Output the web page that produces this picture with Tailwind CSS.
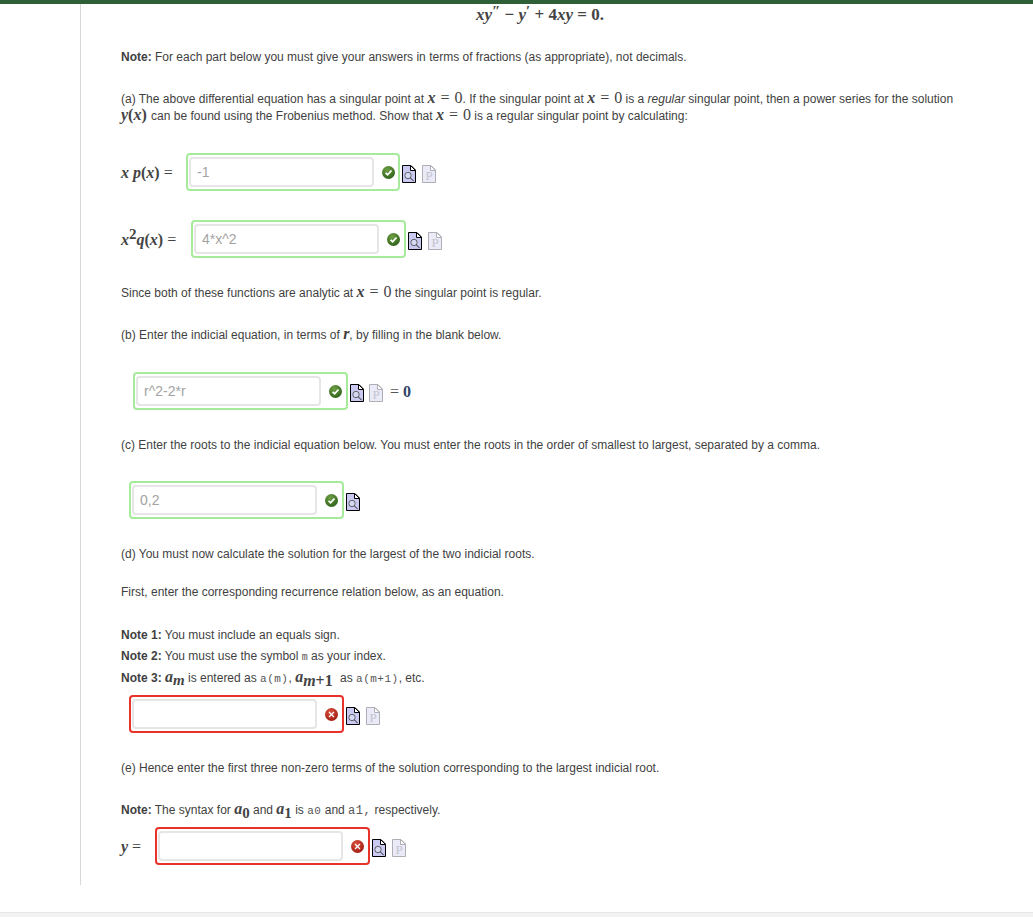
<!DOCTYPE html>
<html lang="en">
<head>
  <meta charset="UTF-8" />
  <meta name="viewport" content="width=device-width, initial-scale=1.0" />
  <title>Frobenius method question</title>
  <script src="https://cdn.jsdelivr.net/npm/@tailwindcss/browser@4"></script>
</head>
<body class="bg-white min-h-screen overflow-hidden font-['Liberation_Sans',Arial,sans-serif] text-[12px] leading-[17px] text-[#3f3f3f]">

  <!-- shared icons -->
  <svg class="absolute w-0 h-0" aria-hidden="true">
    <defs>
      <radialGradient id="okFill" cx="40%" cy="30%" r="75%"><stop offset="0" stop-color="#6f9f45"/><stop offset="1" stop-color="#2c5f17"/></radialGradient>
      <radialGradient id="badFill" cx="40%" cy="30%" r="75%"><stop offset="0" stop-color="#d9503c"/><stop offset="1" stop-color="#a01c12"/></radialGradient>
    </defs>
    <symbol id="ok" viewBox="0 0 13 13">
      <circle cx="6.5" cy="6.5" r="6.5" fill="url(#okFill)"/>
      <path d="M3.6 6.8l2 2 3.900-4.300" fill="none" stroke="#fff" stroke-width="1.8"/>
    </symbol>
    <symbol id="bad" viewBox="0 0 13 13">
      <circle cx="6.5" cy="6.5" r="6.5" fill="url(#badFill)"/>
      <path d="M4 4l5 5M9 4l-5 5" fill="none" stroke="#fff" stroke-width="1.3"/>
    </symbol>
    <symbol id="preview" viewBox="0 0 14 18">
      <path d="M.5.5h8.500l4.500 4.500v12.500h-13z" fill="#c9c9f2" stroke="#000"/>
      <path d="M8.500.5v5h5z" fill="#fff" stroke="#000"/>
      <circle cx="6" cy="10.500" r="3.200" fill="#d5d9f4" stroke="#555" stroke-width=".9"/>
      <path d="M8.300 12.800l3.400 3.400" stroke="#222" stroke-width="1"/>
    </symbol>
    <symbol id="pdoc" viewBox="0 0 14 18">
      <path d="M.5.5h8.500l4.500 4.500v12.500h-13z" fill="#eaeaf9" stroke="#aeaeb4"/>
      <path d="M8.500.5v5h5z" fill="#fff" stroke="#aeaeb4"/>
    </symbol>
  </svg>

  <div class="h-[4px] bg-[#2f5f37]"></div>

  <main class="ml-[80px] h-[881px] border-l border-[#d8d8d8] pl-[40px]">
    <div class="h-[22px] pl-[355px] font-['Liberation_Serif',serif] text-[17px] leading-[22px] font-semibold text-[#444]"><i>xy</i><span class="text-[15px] leading-none align-[4px]">″</span> − <i>y</i><span class="text-[15px] leading-none align-[4px]">′</span> + 4<i>xy</i> = 0.</div>

    <p class="mt-[23px]"><b>Note:</b> For each part below you must give your answers in terms of fractions (as appropriate), not decimals.</p>

    <p class="mt-[25px]">(a) The above differential equation has a singular point at <span class="font-['Liberation_Serif',serif] text-[16px] leading-[12px] text-[#444]"><i class="font-semibold">x</i><span class="mx-[1px]"> = </span>0</span>. If the singular point at <span class="font-['Liberation_Serif',serif] text-[16px] leading-[12px] text-[#444]"><i class="font-semibold">x</i><span class="mx-[1px]"> = </span>0</span> is a <i>regular</i> singular point, then a power series for the solution<br>
      <span class="font-['Liberation_Serif',serif] text-[16px] leading-[12px] font-semibold text-[#444] mr-[1px]"><i>y</i>(<i>x</i>)</span> can be found using the Frobenius method. Show that <span class="font-['Liberation_Serif',serif] text-[16px] leading-[12px] text-[#444]"><i class="font-semibold">x</i><span class="mx-[1px]"> = </span>0</span> is a regular singular point by calculating:</p>

    <div class="mt-[28px] flex items-center h-[38px]">
      <span class="w-[65px] font-['Liberation_Serif',serif] text-[16px] font-semibold text-[#444]"><i>x p</i>(<i>x</i>) <span class="font-normal">=</span></span>
      <div class="w-[214px] h-[38px] flex items-center border-2 border-[#a7ea9c] rounded-[4px] pl-[1px]">
        <input value="-1" class="w-[185px] h-[30px] px-[6px] border-2 border-[#e6e6e6] rounded-[4px] text-[14px] text-[#a3a3a3] outline-none">
        <svg class="ml-[8px] w-[13px] h-[13px]"><use href="#ok"/></svg>
      </div>
      <svg class="ml-[2px] mt-[4px] w-[14px] h-[18px]"><use href="#preview"/></svg>
      <svg class="ml-[6px] mt-[4px] w-[14px] h-[18px]" viewBox="0 0 14 18"><use href="#pdoc"/><text x="3.500" y="15" font-family="Liberation Serif, serif" font-size="13" fill="#c4c4cc">P</text></svg>
    </div>

    <div class="mt-[29px] flex items-center h-[38px]">
      <span class="w-[70px] font-['Liberation_Serif',serif] text-[16px] font-semibold text-[#444]"><i>x</i><span class="text-[15px] leading-[6px] align-[6px]">2</span><i>q</i>(<i>x</i>) <span class="font-normal">=</span></span>
      <div class="w-[215px] h-[38px] flex items-center border-2 border-[#a7ea9c] rounded-[4px] pl-[1px]">
        <input value="4*x^2" class="w-[185px] h-[30px] px-[6px] border-2 border-[#e6e6e6] rounded-[4px] text-[14px] text-[#a3a3a3] outline-none">
        <svg class="ml-[8px] w-[13px] h-[13px]"><use href="#ok"/></svg>
      </div>
      <svg class="ml-[2px] mt-[4px] w-[14px] h-[18px]"><use href="#preview"/></svg>
      <svg class="ml-[6px] mt-[4px] w-[14px] h-[18px]" viewBox="0 0 14 18"><use href="#pdoc"/><text x="3.500" y="15" font-family="Liberation Serif, serif" font-size="13" fill="#c4c4cc">P</text></svg>
    </div>

    <p class="mt-[27px]">Since both of these functions are analytic at <span class="font-['Liberation_Serif',serif] text-[16px] leading-[12px] text-[#444]"><i class="font-semibold">x</i><span class="mx-[1px]"> = </span>0</span> the singular point is regular.</p>

    <p class="mt-[25px]">(b) Enter the indicial equation, in terms of <i class="font-['Liberation_Serif',serif] text-[16px] leading-[12px] font-semibold">r</i>, by filling in the blank below.</p>

    <div class="mt-[28px] ml-[12px] flex items-center h-[38px]">
      <div class="w-[215px] h-[38px] flex items-center border-2 border-[#a7ea9c] rounded-[4px] pl-[1px]">
        <input value="r^2-2*r" class="w-[185px] h-[30px] px-[6px] border-2 border-[#e6e6e6] rounded-[4px] text-[14px] text-[#a3a3a3] outline-none">
        <svg class="ml-[8px] w-[13px] h-[13px]"><use href="#ok"/></svg>
      </div>
      <svg class="ml-[2px] mt-[4px] w-[14px] h-[18px]"><use href="#preview"/></svg>
      <svg class="ml-[5px] mt-[4px] w-[14px] h-[18px]" viewBox="0 0 14 18"><use href="#pdoc"/><text x="3.500" y="15" font-family="Liberation Serif, serif" font-size="13" fill="#c4c4cc">P</text></svg>
      <span class="ml-[7px] font-['Liberation_Serif',serif] text-[16px] text-[#555]">= <b class="text-[#2f4468]">0</b></span>
    </div>

    <p class="mt-[27px]">(c) Enter the roots to the indicial equation below. You must enter the roots in the order of smallest to largest, separated by a comma.</p>

    <div class="mt-[27px] ml-[8px] flex items-center h-[38px]">
      <div class="w-[215px] h-[38px] flex items-center border-2 border-[#a7ea9c] rounded-[4px] pl-[1px]">
        <input value="0,2" class="w-[185px] h-[30px] px-[6px] border-2 border-[#e6e6e6] rounded-[4px] text-[14px] text-[#a3a3a3] outline-none">
        <svg class="ml-[8px] w-[13px] h-[13px]"><use href="#ok"/></svg>
      </div>
      <svg class="ml-[2px] mt-[4px] w-[14px] h-[18px]"><use href="#preview"/></svg>
    </div>

    <p class="mt-[27px]">(d) You must now calculate the solution for the largest of the two indicial roots.</p>

    <p class="mt-[21px]">First, enter the corresponding recurrence relation below, as an equation.</p>

    <p class="mt-[26px]"><b>Note 1:</b> You must include an equals sign.</p>
    <p class="mt-[4px]"><b>Note 2:</b> You must use the symbol <span class="font-['Liberation_Mono',monospace] text-[10px] leading-none text-[#555]">m</span> as your index.</p>
    <p class="mt-[5px] whitespace-nowrap"><b>Note 3:</b> <span class="font-['Liberation_Serif',serif] text-[16px] leading-[12px] font-semibold text-[#444]"><i>a<span class="text-[15px] leading-[6px] align-[-3px]">m</span></i></span> is entered as <span class="font-['Liberation_Mono',monospace] text-[11px] leading-none tracking-[0.5px] text-[#555]">a(m)</span>, <span class="font-['Liberation_Serif',serif] text-[16px] leading-[12px] font-semibold text-[#444] mr-[4px]"><i>a</i><span class="text-[16px] leading-[6px] align-[-4px]"><i>m</i>+1</span></span> as <span class="font-['Liberation_Mono',monospace] text-[11px] leading-none tracking-[0.5px] text-[#555]">a(m+1)</span>, etc.</p>

    <div class="mt-[8px] ml-[8px] flex items-center h-[38px]">
      <div class="w-[215px] h-[38px] flex items-center border-2 border-[#e8332a] rounded-[4px] pl-[1px]">
        <input class="w-[185px] h-[30px] px-[6px] border-2 border-[#e6e6e6] rounded-[4px] text-[14px] outline-none">
        <svg class="ml-[8px] w-[13px] h-[13px]"><use href="#bad"/></svg>
      </div>
      <svg class="ml-[2px] mt-[4px] w-[14px] h-[18px]"><use href="#preview"/></svg>
      <svg class="ml-[6px] mt-[4px] w-[14px] h-[18px]" viewBox="0 0 14 18"><use href="#pdoc"/><text x="3.500" y="15" font-family="Liberation Serif, serif" font-size="13" fill="#c4c4cc">P</text></svg>
    </div>

    <p class="mt-[27px]">(e) Hence enter the first three non-zero terms of the solution corresponding to the largest indicial root.</p>

    <p class="mt-[25px] whitespace-nowrap"><b>Note:</b> The syntax for <span class="font-['Liberation_Serif',serif] text-[16px] leading-[12px] font-semibold text-[#444]"><i>a</i><span class="text-[15px] leading-[6px] align-[-4px]">0</span></span> and <span class="font-['Liberation_Serif',serif] text-[16px] leading-[12px] font-semibold text-[#444]"><i>a</i><span class="text-[15px] leading-[6px] align-[-4px]">1</span></span> is <span class="font-['Liberation_Mono',monospace] text-[11px] leading-none tracking-[0.5px] text-[#555]">a0</span> and <span class="font-['Liberation_Mono',monospace] text-[12px] leading-none tracking-[0.5px] text-[#555]">a1,</span> respectively.</p>

    <div class="mt-[8px] flex items-center h-[38px]">
      <span class="w-[34px] font-['Liberation_Serif',serif] text-[16px] font-semibold text-[#444]"><i>y</i> <span class="font-normal">=</span></span>
      <div class="w-[215px] h-[38px] flex items-center border-2 border-[#e8332a] rounded-[4px] pl-[1px]">
        <input class="w-[185px] h-[30px] px-[6px] border-2 border-[#e6e6e6] rounded-[4px] text-[14px] outline-none">
        <svg class="ml-[8px] w-[13px] h-[13px]"><use href="#bad"/></svg>
      </div>
      <svg class="ml-[2px] mt-[4px] w-[14px] h-[18px]"><use href="#preview"/></svg>
      <svg class="ml-[6px] mt-[4px] w-[14px] h-[18px]" viewBox="0 0 14 18"><use href="#pdoc"/><text x="3.500" y="15" font-family="Liberation Serif, serif" font-size="13" fill="#c4c4cc">P</text></svg>
    </div>
  </main>

  <div class="mt-[27px] h-[5px] bg-[#f2f2f2] border-t border-[#e6e6e6]"></div>
</body>
</html>
